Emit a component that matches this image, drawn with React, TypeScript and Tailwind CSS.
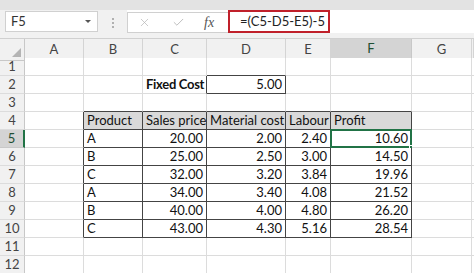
import { Check, X } from 'lucide-react';

const cols = ['A', 'B', 'C', 'D', 'E', 'F', 'G', ''];
const colWidths = 'grid-cols-[25px_59px_59px_64px_79px_45px_81px_60px_1fr]';

type Cell = { text: string; align?: 'left' | 'right'; bold?: boolean };

const tableRows: string[][] = [
	['A', '20.00', '2.00', '2.40', '10.60'],
	['B', '25.00', '2.50', '3.00', '14.50'],
	['C', '32.00', '3.20', '3.84', '19.96'],
	['A', '34.00', '3.40', '4.08', '21.52'],
	['B', '40.00', '4.00', '4.80', '26.20'],
	['C', '43.00', '4.30', '5.16', '28.54'],
];

function getCell(r: number, c: number): Cell {
	if (r === 2 && c === 2) return { text: 'Fixed Cost', bold: true };
	if (r === 2 && c === 3) return { text: '5.00', align: 'right' };
	if (r === 4 && c >= 1 && c <= 5)
		return { text: ['Product', 'Sales price', 'Material cost', 'Labour', 'Profit'][c - 1] };
	if (r >= 5 && r <= 10 && c >= 1 && c <= 5) {
		const v = tableRows[r - 5][c - 1];
		return { text: v, align: c === 1 ? 'left' : 'right' };
	}
	return { text: '' };
}

const inTable = (r: number, c: number) => r >= 4 && r <= 10 && c >= 1 && c <= 5;
const inBox = (r: number, c: number) => r === 2 && c === 3;

function rightDark(r: number, c: number) {
	return inTable(r, c) || inTable(r, c + 1) || inBox(r, c) || inBox(r, c + 1);
}
function bottomDark(r: number, c: number) {
	return inTable(r, c) || inTable(r + 1, c) || inBox(r, c) || inBox(r + 1, c);
}

function GridCell({ r, c }: { r: number; c: number }) {
	const cell = getCell(r, c);
	const selected = r === 5 && c === 5;
	return (
		<div
			className={[
				'relative flex h-[18px] items-center overflow-visible border-r border-b px-[3px] whitespace-nowrap',
				rightDark(r, c) ? 'border-r-[#444]' : 'border-r-[#dcdcdc]',
				bottomDark(r, c) ? 'border-b-[#444]' : 'border-b-[#dcdcdc]',
				r === 4 && inTable(r, c) ? 'bg-[#d9d9d9]' : 'bg-white',
				cell.align === 'right' ? 'justify-end' : 'justify-start',
				cell.bold ? 'font-bold tracking-[-0.3px]' : '',
			].join(' ')}
		>
			{cell.text}
			{selected && (
				<>
					<div className="absolute -top-px -right-px -bottom-px -left-px border-2 border-[#217346]" />
					<div className="absolute -right-[3px] -bottom-[3px] h-[5px] w-[5px] border border-white bg-[#217346]" />
				</>
			)}
		</div>
	);
}

export default function App() {
	const rows = Array.from({ length: 12 }, (_, i) => i + 1);
	return (
		<div className="h-[273px] w-[474px] overflow-hidden bg-white font-['Lato',sans-serif] text-[13px] text-[#111]">
			<div className="h-[10px] bg-[#e3e3e3]" />
			<div className="flex h-[28px] bg-[#f1f1f1] pt-px">
				<div className="ml-[5px] flex h-[21px] w-[93px] items-center justify-between border border-[#d0d0d0] bg-white pr-[6px] pl-[5px] text-[#333]">
					<span>F5</span>
					<span className="h-0 w-0 border-x-[3px] border-t-[3px] border-x-transparent border-t-[#555]" />
				</div>
				<div className="flex w-[29px] flex-col items-center justify-center gap-[2px] pb-[4px]">
					<span className="h-[2px] w-[2px] rounded-full bg-[#9a9a9a]" />
					<span className="h-[2px] w-[2px] rounded-full bg-[#9a9a9a]" />
					<span className="h-[2px] w-[2px] rounded-full bg-[#9a9a9a]" />
				</div>
				<div className="-mt-px flex h-[23px] flex-1 items-center bg-white">
					<div className="mt-px flex h-[21px] w-[101px] items-center border-y border-l border-[#d0d0d0] pl-[10px]">
						<X size={13} strokeWidth={1.3} className="text-[#b5b5b5]" />
						<Check size={13} strokeWidth={1.6} className="ml-[21px] text-[#b5b5b5]" />
						<span className="ml-[19px] font-['Liberation_Serif',serif] text-[14px] text-[#555] italic">
							fx
						</span>
					</div>
					<div className="flex h-[23px] w-[102px] items-center border-2 border-[#c0202a] pl-[10px] text-[#222]">
						=(C5-D5-E5)-5
					</div>
				</div>
			</div>
			<div className={`grid ${colWidths} h-[20px] border-t border-[#d0d0d0] bg-[#f1f1f1] text-[#444]`}>
				<div className="relative border-r border-b border-[#c8c8c8]">
					<svg className="absolute right-[3px] bottom-[3px]" width="9" height="9" viewBox="0 0 10 10">
						<polygon points="10,0 10,10 0,10" fill="#b4b4b4" />
					</svg>
				</div>
				{cols.map((c) => (
					<div
						key={c || 'h'}
						className={
							c === 'F'
								? 'flex items-center justify-center border-r border-b-2 border-r-[#c8c8c8] border-b-[#217346] bg-[#d4d4d4] text-[#1f4f33]'
								: 'flex items-center justify-center border-r border-b border-[#d4d4d4]'
						}
					>
						{c}
					</div>
				))}
			</div>
			{rows.map((r) => (
				<div key={r} className={`grid ${colWidths}`}>
					<div
						className={
							r === 5
								? 'flex h-[18px] items-center justify-center border-r-2 border-b border-r-[#217346] border-b-[#c8c8c8] bg-[#d4d4d4] text-[#1f4f33]'
								: 'flex h-[18px] items-center justify-center border-r border-b border-r-[#c8c8c8] border-b-[#dcdcdc] bg-[#f1f1f1] text-[#444]'
						}
					>
						{r}
					</div>
					{cols.map((_, c) => (
						<GridCell key={c} r={r} c={c} />
					))}
				</div>
			))}
		</div>
	);
}
